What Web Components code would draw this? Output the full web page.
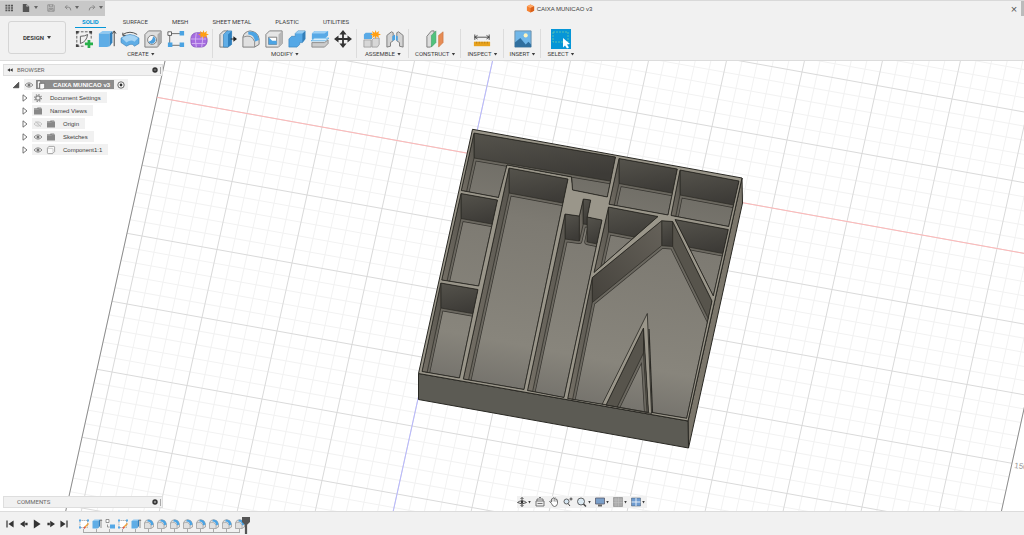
<!DOCTYPE html>
<html lang="en">
<head>
<meta charset="utf-8">
<title>CAIXA MUNICAO v3</title>
<style>
html,body{margin:0;height:100%;background:#f1f1f1;overflow:hidden}
body{font:6px/8px Roboto,"Liberation Sans",sans-serif;color:#3c3c3c}
</style>
</head>
<body>
<cad-app></cad-app>
<script>
const ICONS={
grid:'<g fill="#555"><path d="M1 2h5v4H1zM8 2h5v4H8zM15 2h5v4h-5zM1 8h5v4H1zM8 8h5v4H8zM15 8h5v4h-5zM1 14h5v4H1zM8 14h5v4H8zM15 14h5v4h-5z"/></g>',
file:'<path fill="#555" d="M2 0h9l7 6v14H2z"/><path fill="#c8c8c8" d="M11 1v5h6z"/>',
save:'<path fill="none" stroke="#888" stroke-width="2" d="M2 2h14l2 2v14H2zM6 2v5h8V2M5 18v-7h10v7M7 14h6"/>',
undo:'<path fill="none" stroke="#888" stroke-width="2.4" d="M8 3L3 8l5 5M3 8h8q6 0 6 8"/>',
redo:'<path fill="none" stroke="#888" stroke-width="2.4" d="M12 3l5 5-5 5M17 8H9q-6 0-6 8"/>',
cube:'<path fill="#f58233" d="M10 1l8 4v10l-8 4-8-4V5z"/><path fill="#ffa866" d="M10 1l8 4-8 4-8-4z"/><path fill="#d9601a" d="M10 9l8-4v10l-8 4z"/>',
sketch:'<g fill="none" stroke="#555" stroke-width="1"><path stroke-dasharray="3 1.5" d="M2 2h16M2 2v16M2 18h9M18 2v9"/><path d="M6 15V7q5 0 8-2-1 8-8 10z"/></g><path fill="#444" d="M1 1h3v3H1zM16 1h3v3h-3zM1 16h3v3H1z"/><path fill="#27b04a" d="M14 11h3v3h3v3h-3v3h-3v-3h-3v-3h3z"/>',
extrude:'<path fill="#8fc8f1" d="M1 4l4-3h11l-3 3z"/><path fill="#5fade6" d="M1 4h12v14l-3 1H1z"/><path fill="#2f7fbd" d="M13 4l3-3v13l-3 4z"/><path fill="none" stroke="#333" d="M18 18V2M16 4l2-3 2 3"/>',
revolve:'<path fill="#5fade6" stroke="#3278ae" stroke-width=".6" d="M0 9q10-8 20 0v6l-5 3q-2-3-5-2l-4 2-6-4z"/><path fill="#a6d4f4" d="M1 9q9-7 18 0l-4 4q-4-3-9 1z"/><path fill="none" stroke="#444" d="M2 5q8-5 16 0M2 3v3h3"/>',
hole:'<path fill="#dedede" stroke="#777" d="M1 5l4-4h14v13l-4 5H1z"/><path fill="#aaa" d="M15 5l4-4v13l-4 5z"/><circle cx="9" cy="11" r="5" fill="#f7f7f7" stroke="#777"/><path fill="#4c9fdd" d="M10 7a4.2 4.2 0 1 1-5 6q5-1 5-6z"/>',
pattern:'<path stroke="#666" fill="none" d="M3 16V4h13M5 17h10"/><path fill="#fff" stroke="#555" d="M1 2h4v4H1z"/><path fill="#4ba3e2" d="M14 1h5v5h-5zM14 14h5v5h-5zM1 14h5v5H1z"/>',
form:'<path fill="#a66de0" stroke="#7d49b8" stroke-width=".8" d="M1 10q0-6 6-7h6q5 1 6 7v3q-1 6-7 6H7q-6 0-6-6z"/><path stroke="#d5b5f4" fill="none" d="M1 10h17M7 3q-2 8 0 16M13 3q2 8 0 16M2 15h15"/><path fill="#ff9f12" d="M15 0l1 3 3-2-1 3 3 1-3 1 1 3-3-2-1 3-1-3-3 2 1-3-3-1 3-1-1-3 3 2z"/>',
presspull:'<path fill="#ddd" stroke="#777" d="M1 5l4-4h5v18H1z"/><path fill="#5fade6" stroke="#357cb3" stroke-width=".7" d="M5 5l4-4h5v15l-4 3H5z"/><path fill="#2f7fbd" d="M10 5l4-4v15l-4 3z"/><path stroke="#222" d="M13 10h5" fill="none"/><path fill="#222" d="M16 7l4 3-4 3z"/>',
fillet:'<path fill="#e0e0e0" stroke="#777" d="M1 8q1-6 8-7 9 1 10 9v6l-5 3H1z"/><path fill="#4ca4e4" d="M7 2q10-2 12 9l-5 2q0-8-7-8z"/><path fill="none" stroke="#888" d="M1 8q10-4 13 5v6"/>',
shell:'<path fill="#e6e6e6" stroke="#777" d="M1 5l4-4h14v14l-4 4H1z"/><path fill="#b7b7b7" d="M15 5l4-4v14l-4 4z"/><path fill="#fff" stroke="#777" d="M4 8h9v8H4z"/><path fill="#4ca4e4" d="M4 8l4 4h5v4H4z"/>',
combine:'<path fill="#55a8e6" stroke="#3581bb" stroke-width=".7" d="M1 10l3-3h4V4l3-3h8v9l-3 4h-3v2l-3 3H1z"/><path fill="#347fb9" d="M16 4l3-3v9l-3 4z"/><path fill="#96ccf2" d="M8 4l3-3h8l-3 3z"/>',
split:'<path fill="#58a9e6" d="M1 4l3-3h15v5l-4 4H1z"/><path fill="#9ed0f4" d="M1 4l3-3h15l-4 3z"/><path fill="#d9edfa" stroke="#63b4e8" d="M0 12l4-3h16l-4 3z"/><path fill="#ccc" stroke="#888" d="M1 14h14l4-3v4l-4 4H1z"/>',
move:'<path fill="#333" d="M10 0l4 5h-3v4h4V6l5 4-5 4v-3h-4v4h3l-4 5-4-5h3v-4H5v3l-5-4 5-4v3h4V5H6z"/>',
component:'<path fill="#5aaae6" d="M1 5l2-2h7v7H1z"/><path fill="#d7d7d7" stroke="#888" stroke-width=".7" d="M1 11h8v8H1zM10 11l2-2h6v7l-2 3h-6z"/><path fill="#ff9f12" d="M14 0l1 3 3-2-1 3 3 1-3 1 1 3-3-2-1 3-1-3-3 2 1-3-3-1 3-1-1-3 3 2z"/>',
joint:'<path fill="#d3d3d3" stroke="#777" d="M1 19V6l5-4 2 1v9l-3 2v4zM19 19V6l-5-4-2 1v9l3 2v4z"/><path fill="#4ca4e4" d="M7 7l3-2v6l-3 1zM11 6l2 1v5l-2-1z"/>',
plane:'<path fill="#ddd" stroke="#777" d="M1 7l5-6h3v14l-4 4H1z"/><path fill="#4fc27c" stroke="#379a5d" stroke-width=".6" d="M6 6l5-5v13l-5 5z"/><path fill="#e68c55" stroke="#c56c36" stroke-width=".6" d="M14 6l5-4v12l-5 5z"/>',
measure:'<path stroke="#444" fill="none" d="M2 5v6M18 5v6M2 8h16M5 6L2 8l3 2M15 6l3 2-3 2"/><path fill="#e8a21d" d="M1 13h18v5H1z"/><path stroke="#9c6b0a" stroke-width=".6" d="M4 13v2M7 13v2M10 13v2M13 13v2M16 13v2"/>',
picture:'<path fill="#70b7e9" stroke="#6c8da5" d="M1 1h18v18H1z"/><path fill="#316f9e" d="M1 19v-5l6-5 6 7 3-3 3 3v3z"/><circle cx="13" cy="6" r="2.3" fill="#fff3bc"/>',
select:'<path fill="#0696d7" d="M0 0h20v20H0z"/><path fill="none" stroke="#76d3a3" stroke-width=".7" stroke-dasharray="2 1" d="M2 3h15v10H2z"/><path fill="#fff" d="M12 9l7 6-3 .5 2 3-2 1-2-3-2 2z"/>',
eye:'<path fill="none" stroke="#777" stroke-width="2" d="M0 10q10-11 20 0-10 11-20 0z"/><circle cx="10" cy="10" r="3.8" fill="#777"/>',
eyeoff:'<path fill="none" stroke="#bbb" stroke-width="2" d="M0 10q10-11 20 0-10 11-20 0zM4 3l13 14"/><circle cx="10" cy="10" r="3" fill="none" stroke="#bbb"/>',
gear:'<circle cx="10" cy="10" r="5.5" fill="none" stroke="#888" stroke-width="3"/><circle cx="10" cy="10" r="8.5" fill="none" stroke="#888" stroke-width="3" stroke-dasharray="3.3 3.37"/>',
folder:'<path fill="#888" d="M0 3h7l2-2h9v3h2v15H0z"/><path stroke="#bbb" d="M0 6h11l2-2h6" fill="none"/>',
body:'<path fill="#fafafa" stroke="#777" stroke-width="1.6" d="M1 6q0-2 2-3l2-2h12q2 0 2 2v11l-4 4q-1 1-2 1H3q-2 0-2-2z"/><path fill="none" stroke="#aaa" stroke-width="1.3" d="M2 6h11q2 0 2 2v10"/>',
assembly:'<path fill="#fafafa" stroke="#555" stroke-width="1.3" d="M1 0h8v5H6v13H1zM7 9l3-3h9v10l-3 4H7z"/>',
tri:'<path fill="#fff" stroke="#555" stroke-width="2" d="M5 2l10 8-10 8z"/>',
open:'<path fill="#555" stroke="#333" stroke-width="1.5" d="M17 3v14H3z"/>',
target:'<circle cx="10" cy="10" r="8" fill="#fff" stroke="#444" stroke-width="2"/><circle cx="10" cy="10" r="3.5" fill="#333"/>',
dot:'<circle cx="10" cy="10" r="9" fill="#333"/><path stroke="#ddd" stroke-width="2" d="M6 10h8"/>',
plus:'<circle cx="10" cy="10" r="9" fill="#333"/><path stroke="#ddd" stroke-width="2" d="M6 10h8M10 6v8"/>',
collapse:'<path fill="#333" d="M10 4v12L1 10zM19 4v12l-9-6z"/>',
first:'<path fill="#333" d="M1 1h3v18H1zM19 1v18L6 10z"/>',
prev:'<path fill="#333" d="M12 2v16L0 10zM13 7h6v6h-6z"/>',
play:'<path fill="#333" d="M2-1l17 11L2 21z"/>',
next:'<path fill="#333" d="M8 2v16l12-8zM1 7h6v6H1z"/>',
last:'<path fill="#333" d="M16 1h3v18h-3zM1 1v18l13-9z"/>',
tsketch:'<path fill="#fff" stroke="#777" stroke-dasharray="3 1" d="M2 3h15v14H2z"/><path fill="#55a8e6" d="M0 1h4v4H0zM16 1h4v4h-4zM0 15h4v4H0z"/><path stroke="#f2a23a" stroke-width="3" d="M19 9l-8 8"/><path stroke="#e2574c" stroke-width="3" d="M12 16l-2 3"/>',
tcomp:'<path fill="#fff" stroke="#777" stroke-width="1.5" d="M2 1h6v6H2zM5 11v5h4"/><path fill="#55a8e6" d="M10 11h10v8H10z"/>',
orbit:'<path fill="none" stroke="#444" stroke-width="1.8" d="M10 1v18M1 11q9-7 18 0-9 6-18 0M7 4l3-3 3 3M7 16l3 3 3-3"/><circle cx="10" cy="10" r="2.5" fill="#333"/>',
look:'<path fill="#eee" stroke="#666" stroke-width="1.8" d="M2 8h16v10H2zM4 8V4h12v4"/><path stroke="#666" stroke-width="1.8" d="M5 13h10M8 1h4"/>',
hand:'<path fill="#fff" stroke="#555" stroke-width="1.6" d="M5 13L1 9q2-2 4 1V4q2-2 3 0V2q2-2 3 0v1q2-2 3 0v3q3-2 3 1v6q-1 6-6 6-4 0-6-6z"/><path stroke="#555" d="M8 4v5M11 3v6M14 5v5"/>',
zoomio:'<circle cx="7" cy="9" r="5" fill="#d6e6f2" stroke="#555" stroke-width="1.8"/><path stroke="#444" stroke-width="2" d="M10 13l4 5M13 4h6M16 1v6"/>',
zoomfit:'<circle cx="8" cy="9" r="7" fill="#dceaf3" stroke="#555" stroke-width="1.8"/><path stroke="#444" stroke-width="3" d="M13 14l5 5"/>',
screen:'<path fill="#7a9fc9" stroke="#556" stroke-width="1.5" d="M1 2h18v12H1z"/><path fill="#666" d="M6 15h8v4H6z"/>',
gridset:'<path fill="#aaa" stroke="#777" d="M1 1h18v18H1z"/><path stroke="#c4c4c4" d="M1 6h18M1 11h18M6 1v18M11 1v18"/>',
views:'<path fill="#6d9bd0" stroke="#456" d="M1 2h18v16H1z"/><path stroke="#e6eef8" stroke-width="2" d="M10 2v16M1 10h18"/>'
};
function define(name,css,html,ready){
  const t=document.createElement('template');
  t.innerHTML='<style>*{box-sizing:border-box}button{font:inherit;color:inherit;background:none;border:0;margin:0;padding:0;display:flex;align-items:center;justify-content:center}'+css+'</style>'+html;
  customElements.define(name,class extends HTMLElement{
    connectedCallback(){
      if(this.shadowRoot)return;
      this.attachShadow({mode:'open'}).append(t.content.cloneNode(true));
      if(ready)ready(this,this.shadowRoot);
    }
  });
}

define('ui-icon',':host{display:block;flex:none;width:var(--icon,10px);height:var(--icon,10px)}svg{display:block;width:100%;height:100%;overflow:visible}',
'<svg viewBox="0 0 20 20" aria-hidden="true"></svg>',(h,r)=>{r.querySelector('svg').innerHTML=ICONS[h.getAttribute('name')]||''});

define('ui-caret',':host{display:block;flex:none;width:4px;height:3px;background:currentColor;clip-path:polygon(0 0,100% 0,50% 100%)}','');

define('title-bar',`
:host{display:flex;box-sizing:border-box;height:16px;border-top:1px solid #d9d9d9;align-items:center;font:6px/8px "Liberation Sans",sans-serif}
.quick{display:flex;align-items:center;align-self:stretch;width:105px;padding:0 0 2px 5px;background:#c8c8c8;color:#666;--icon:8px}
.quick button{gap:4px;height:12px;margin-right:9px}
.quick button:nth-child(n+4){gap:3px}
.doc{flex:1;display:flex;justify-content:center;align-items:center;gap:2px;padding-left:4px;--icon:9px}
.close{width:10px;font-size:11px;line-height:14px;margin-right:2px;color:#555}
.edge{width:3px;align-self:stretch;background:#bbb}
`,`<div class="quick">
<button aria-label="Data panel"><ui-icon name="grid"></ui-icon></button>
<button aria-label="File"><ui-icon name="file"></ui-icon><ui-caret></ui-caret></button>
<button aria-label="Save"><ui-icon name="save"></ui-icon></button>
<button aria-label="Undo"><ui-icon name="undo"></ui-icon><ui-caret></ui-caret></button>
<button aria-label="Redo"><ui-icon name="redo"></ui-icon><ui-caret></ui-caret></button>
</div><div class="doc"><ui-icon name="cube"></ui-icon><span>CAIXA MUNICAO v3</span></div>
<button class="close" aria-label="Close">×</button><div class="edge"></div>`);

define('tool-group',`
:host{display:flex;flex-direction:column;align-items:center;justify-content:space-between;border-right:1px solid #dcdcdc;height:29px}
:host([last]){border:0}
.icons{display:flex;gap:4px;padding:0 4px 0 5px;height:20px;align-items:center;--icon:18px}
.icons button{width:19px;height:20px}
:host([last]) .icons{--icon:20px}
.label{gap:2px;padding:0 5px 0 6px;height:8px;white-space:nowrap}
`,'<div class="icons"></div><button class="label"><slot></slot><ui-caret></ui-caret></button>',(h,r)=>{
 for(const n of h.getAttribute('icons').split(' ')){
  const b=document.createElement('button');b.setAttribute('aria-label',n);
  b.innerHTML='<ui-icon name="'+n+'"></ui-icon>';r.querySelector('.icons').append(b);
 }});

define('tool-ribbon',`
:host{display:flex;box-sizing:border-box;height:45px;padding-left:8px;border-bottom:1px solid #dcdcdc;background:#f1f1f1}
.space{width:58px;height:33px;margin-top:5px;border:1px solid #d5d5d5;border-radius:3px;font-weight:700;gap:3px;flex:none}
.main{flex:1;min-width:0}
nav{display:flex;gap:24px;height:12px;padding:0 0 0 16px}
nav a{color:inherit;text-decoration:none;white-space:nowrap;height:12px;line-height:11px}
nav a.on{color:#0696d7;font-weight:700;border-bottom:1px solid #0696d7;padding:0 7px;margin:0 -7px}
.groups{display:flex;padding:1px 0 0 3px}
`,`<button class="space">DESIGN <ui-caret></ui-caret></button><div class="main">
<nav><a class="on" href="#solid">SOLID</a><a href="#surface">SURFACE</a><a href="#mesh">MESH</a><a href="#sheet">SHEET METAL</a><a href="#plastic">PLASTIC</a><a href="#utilities">UTILITIES</a></nav>
<div class="groups">
<tool-group icons="sketch extrude revolve hole pattern form">CREATE</tool-group>
<tool-group icons="presspull fillet shell combine split move">MODIFY</tool-group>
<tool-group icons="component joint">ASSEMBLE</tool-group>
<tool-group icons="plane">CONSTRUCT</tool-group>
<tool-group icons="measure">INSPECT</tool-group>
<tool-group icons="picture">INSERT</tool-group>
<tool-group icons="select" last>SELECT</tool-group>
</div></div>`);

define('panel-head',`
:host{display:flex;box-sizing:border-box;align-items:center;height:12px;padding:0 0 0 3px;background:#f1f1f1;border:1px solid #dedede;color:#666;--icon:6px}
.mark{width:7px;margin-right:3px}
.title{flex:1}.grip{width:2px;height:7px;border-left:1px solid #aaa;margin-left:2px}
`,'<div class="mark"><slot name="mark"></slot></div><span class="title"><slot></slot></span><slot name="action"></slot><i class="grip"></i>');

define('tree-row',`
:host{display:flex;align-items:center;height:11px;gap:3px;padding-left:15px;font:6px/8px "Liberation Sans",sans-serif;--icon:8px}
:host([root]){padding-left:6px;font-weight:700;gap:4px}
.chip{display:flex;align-items:center;gap:5px;height:11px;padding:0 6px 0 2px;background:#f1f1f1;white-space:nowrap}
:host([root]) .chip{padding:0 3px 0 1px;gap:3px}
.name{display:flex;align-items:center;gap:8px}
:host([root]) .name{height:9px;background:#8c8c8c;color:#fff;padding:0 4px 0 1px}
`,'<button aria-label="Expand"><ui-icon></ui-icon></button><div class="chip"><slot name="eye"></slot><span class="name"><slot name="kind"></slot><slot></slot></span><slot name="end"></slot></div>',(h,r)=>{
 const i=r.querySelector('ui-icon'),n=document.createElement('ui-icon');n.setAttribute('name',h.hasAttribute('root')?'open':'tri');i.replaceWith(n);});

define('browser-panel',`
:host{display:block;width:160px}
.tree{display:flex;flex-direction:column;gap:2px;padding:3px 0 0 3px}
`,`<panel-head><ui-icon slot="mark" name="collapse"></ui-icon>BROWSER<ui-icon slot="action" name="dot"></ui-icon></panel-head>
<div class="tree">
<tree-row root><ui-icon slot="eye" name="eye"></ui-icon><ui-icon slot="kind" name="assembly"></ui-icon>CAIXA MUNICAO v3<ui-icon slot="end" name="target"></ui-icon></tree-row>
<tree-row><ui-icon slot="kind" name="gear"></ui-icon>Document Settings</tree-row>
<tree-row><ui-icon slot="kind" name="folder"></ui-icon>Named Views</tree-row>
<tree-row><ui-icon slot="eye" name="eyeoff"></ui-icon><ui-icon slot="kind" name="folder"></ui-icon>Origin</tree-row>
<tree-row><ui-icon slot="eye" name="eye"></ui-icon><ui-icon slot="kind" name="folder"></ui-icon>Sketches</tree-row>
<tree-row><ui-icon slot="eye" name="eye"></ui-icon><ui-icon slot="kind" name="body"></ui-icon>Component1:1</tree-row>
</div>`);

define('nav-bar',`
:host{display:flex;align-items:center;gap:4px;height:12px;padding:0 2px 0 0;background:#f1f1f1;--icon:10px}
button{gap:1px;height:12px}ui-caret{width:3px}
`,['orbit+','look','hand','zoomio','zoomfit+','screen+','gridset+','views+'].map(n=>{const k=n.replace('+','');return `<button aria-label="${k}"><ui-icon name="${k}"></ui-icon>${n!==k?'<ui-caret></ui-caret>':''}</button>`}).join(''));

/* The model: every pocket is an opening in the rim, its walls drop straight down by DEPTH. */
const DEPTH=25;
const POCKETS=[
 [[474,133],[615.5,157],[607.3,197],[572.5,190],[571.5,177],[507,165],[498.5,197.5],[461.3,190.5]],
 [[461,193.5],[497.5,200],[478.7,286],[441.7,280]],
 [[440.8,283],[478,289.5],[459.5,378],[422,371.5]],
 [[509,168],[568,179],[524,389.5],[463.3,379]],
 [[565,214],[579.3,216],[583.3,199],[590.7,200],[587.3,217],[602,220],[564,397.5],[527.5,390.5]],
 [[619,158.5],[677.3,169],[668,215],[609,204.3]],
 [[680,170],[739,181],[728.7,226.5],[671,215.5]],
 [[608.5,207],[658,216.5],[594,272.5]],
 [[675,219.5],[728.3,229.5],[713.3,296]],
 [[661.7,220.7],[672.7,221.5],[712,301],[686.7,418.3],[567.7,398.5],[592.3,277.5]]
];
const SPIKE=[[643.5,328],[648.5,412.5],[606,405]];
const pts=a=>a.map(p=>p.join()).join(' ');
function pocket(p,id){
 const low=p.map(q=>[q[0],q[1]+DEPTH]);
 const walls=p.map((a,i)=>{
  const b=p[(i+1)%p.length],dx=Math.abs(b[0]-a[0]),dy=Math.abs(b[1]-a[1]);
  const f=dx>dy*3?'url(#back)':(dx>dy*1.1?'url(#diag)':(dx>dy*.35?'#57544c':'url(#side)'));
  return {d:Math.min(a[1],b[1]),s:`<polygon points="${pts([a,b,[b[0],b[1]+DEPTH],[a[0],a[1]+DEPTH]])}" fill="${f}"/>`};
 }).sort((a,b)=>a.d-b.d).map(w=>w.s).join('');
 return `<clipPath id="c${id}"><polygon points="${pts(p)}"/></clipPath><g clip-path="url(#c${id})" stroke="#292823" stroke-width=".7" stroke-linejoin="round">
 <polygon points="${pts(p)}" fill="#5b5850"/><polygon points="${pts(low)}" fill="url(#floor)" stroke-width="6" stroke="#35332e"/><polygon points="${pts(low)}" fill="none" stroke-width="4.6" stroke="#6b6860"/>${walls}</g>
 <polygon points="${pts(p)}" fill="none" stroke="#292823" stroke-width=".8"/>`;
}
function grid(){
 const O=[472,154],u=[75,13.5],v=[-15,68];let minor='',major='';
 const at=(a,b)=>(O[0]+a*u[0]+b*v[0]).toFixed(1)+' '+(O[1]+a*u[1]+b*v[1]).toFixed(1);
 for(let i=-21;i<=39;i++){const d='M'+at(i/5,-4)+'L'+at(i/5,8);if(i%5)minor+=d;else major+=d}
 for(let j=-20;j<=40;j++){const d='M'+at(-4.2,j/5)+'L'+at(7.8,j/5);if(j%5)minor+=d;else major+=d}
 return `<g fill="none"><path stroke="#f2f2f2" d="${minor}"/><path stroke="#dadada" d="${major}"/>
 <path stroke="#8c8c8c" d="M${at(-4.2,-4)}L${at(-4.2,8)}M${at(7.8,-4)}L${at(7.8,8)}"/>
 <path stroke="#ffb8b8" d="M${at(-4.2,0)}L${at(7.8,0)}"/><path stroke="#b8b8ff" d="M${at(0,-4)}L${at(0,8)}"/></g>
 <text x="1014" y="468" font-size="8" fill="#999" font-family="Liberation Sans,sans-serif" transform="rotate(8 1014 468)">150</text>`;
}
define('model-scene',':host{display:block}svg{display:block;width:100%;height:100%}',
'<svg viewBox="0 61 1024 450" preserveAspectRatio="xMidYMid slice" role="img" aria-label="Model"></svg>',(h,r)=>{
 r.querySelector('svg').innerHTML=`<defs>
 <linearGradient id="back" x1="0" y1="0" x2=".25" y2="1"><stop offset="0" stop-color="#55534c"/><stop offset="1" stop-color="#3d3b37"/></linearGradient>
 <linearGradient id="diag" x1="0" y1="1" x2="1" y2="0"><stop offset="0" stop-color="#45423c"/><stop offset="1" stop-color="#66625a"/></linearGradient>
 <linearGradient id="side" x1="1" y1="0" x2="0" y2="1"><stop offset="0" stop-color="#58554e"/><stop offset="1" stop-color="#777268"/></linearGradient>
 <linearGradient id="floor" gradientUnits="userSpaceOnUse" x1="600" y1="150" x2="550" y2="420"><stop offset="0" stop-color="#6a6861"/><stop offset=".3" stop-color="#7d7a72"/><stop offset=".75" stop-color="#88857c"/><stop offset="1" stop-color="#6c6a65"/></linearGradient>
 </defs><rect y="0" width="1024" height="600" fill="#fff"/>${grid()}
 <g stroke="#292823" stroke-linejoin="round"><polygon fill="#7b766b" points="742,178 742.5,203 688.5,448 688,421"/>
 <polygon fill="#5c5b54" points="418.5,373.5 688,421 688.5,448 418.5,399.5"/>
 <polygon fill="#9a968a" points="472.5,129.3 742,178 688,421 418.5,373.5"/></g>
 ${POCKETS.map(pocket).join('')}
 <path d="M647.3 313.5L602.3 404 651.5 413.5z" fill="#9a968a" stroke="#292823" stroke-width=".8"/><path d="M649 329L652.5 413" stroke="#292823" stroke-width="1.2"/>
 ${pocket(SPIKE,'s')}`;
});

define('time-line',`
:host{display:flex;box-sizing:border-box;align-items:center;height:24px;border-top:1px solid #dcdcdc;background:#f1f1f1;padding-left:5px}
.play{display:flex;justify-content:space-between;width:64px;--icon:8px;margin-right:8px}
.play button{width:10px;height:14px}
.steps{display:flex;position:relative;--icon:10px;height:22px;align-items:center}
.steps button{width:13px;height:14px}
.steps::after{content:"";position:absolute;left:6px;right:6px;bottom:2px;height:3px;background:repeating-linear-gradient(90deg,#aaa 0 1px,transparent 1px 13px);border-bottom:1px solid #aaa}
.marker{position:relative;width:8px;height:17px;align-self:flex-start;margin:5px 0 0 -4px;background:#555;clip-path:polygon(0 0,100% 0,100% 30%,64% 45%,64% 100%,36% 100%,36% 45%,0 30%)}
`,`<div class="play">${['first','prev','play','next','last'].map(n=>`<button aria-label="${n}"><ui-icon name="${n}"></ui-icon></button>`).join('')}</div>
<div class="steps">${['tsketch','extrude','tcomp','tsketch','extrude',...Array(8).fill('fillet')].map((n,i)=>`<button aria-label="Step ${i+1}"><ui-icon name="${n}"></ui-icon></button>`).join('')}</div><i class="marker"></i>`);

define('cad-app',`
:host{display:flex;flex-direction:column;height:100vh;background:#f1f1f1}
main{flex:1;position:relative;min-height:0;overflow:hidden}
model-scene{height:100%}
browser-panel{position:absolute;left:3px;top:3px}
.comments{position:absolute;left:3px;bottom:3px;width:160px}
nav-bar{position:absolute;left:50%;margin-left:5px;bottom:3px}
`,`<title-bar></title-bar><tool-ribbon></tool-ribbon><main><model-scene></model-scene><browser-panel></browser-panel>
<panel-head class="comments">COMMENTS<ui-icon slot="action" name="plus"></ui-icon></panel-head><nav-bar></nav-bar></main><time-line></time-line>`);
</script>
</body>
</html>
